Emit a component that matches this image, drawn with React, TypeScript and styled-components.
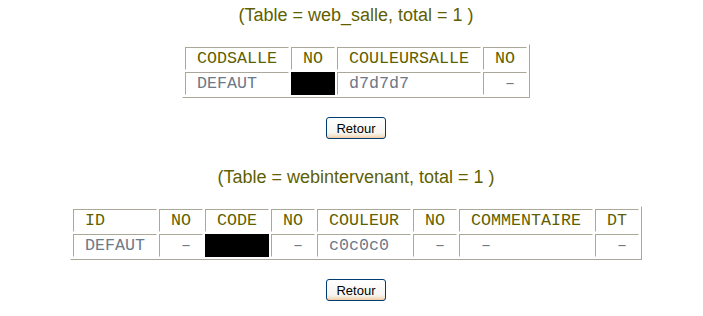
import React from "react";
import styled, { createGlobalStyle } from "styled-components";

const GlobalStyle = createGlobalStyle`
  html, body {
    margin: 0;
    padding: 0;
    background: #ffffff;
  }
  body {
    overflow: hidden;
  }
`;

const Page = styled.main`
  width: 694px;
  padding: 5px 0 0 9px;
  display: flex;
  flex-direction: column;
  align-items: center;
  gap: 28px;
`;

const Section = styled.section`
  display: flex;
  flex-direction: column;
  align-items: center;
`;

const Title = styled.h2`
  margin: 0 0 18px;
  font-family: "Liberation Sans", Arial, sans-serif;
  font-size: 18px;
  line-height: 21px;
  font-weight: normal;
  color: #5f5f00;
  white-space: pre;
`;

const Table = styled.table`
  border-collapse: separate;
  border-spacing: 2px;
  border: 1px solid;
  border-color: #ffffff #aca899 #aca899 #ffffff;
  margin: 0 0 19px;
  font-family: "Liberation Mono", "Courier New", monospace;
  font-size: 16.667px;
  line-height: 19px;
`;

const HeadCell = styled.th`
  font-weight: normal;
  text-align: left;
  color: #5f5f00;
  padding: 1px 11px;
  border: 1px solid;
  border-color: #aca899 #ffffff #ffffff #aca899;
  white-space: pre;
`;

const Cell = styled.td<{ $align?: "left" | "right"; $swatch?: string }>`
  text-align: ${(p) => p.$align ?? "left"};
  color: #6d7888;
  padding: 1px 11px;
  border: 1px solid;
  border-color: ${(p) =>
    p.$swatch ? p.$swatch : "#aca899 #ffffff #ffffff #aca899"};
  background: ${(p) => p.$swatch ?? "transparent"};
  white-space: pre;
`;

const Button = styled.button`
  height: 22px;
  padding: 0 9px;
  border: 1px solid #003c74;
  border-radius: 3px;
  background: linear-gradient(
    to bottom,
    #ffffff 0%,
    #f6f5f0 75%,
    #f3e2c8 90%,
    #efc9a0 100%
  );
  font-family: "Liberation Sans", Arial, sans-serif;
  font-size: 13px;
  line-height: 15px;
  color: #000000;
  cursor: pointer;
`;

type Column = { label: string; align?: "left" | "right" };
type Value = { text?: string; swatch?: string };

type DataTable = {
  name: string;
  columns: Column[];
  row: Value[];
};

const DASH = "\u2013";

const tables: DataTable[] = [
  {
    name: "web_salle",
    columns: [
      { label: "CODSALLE" },
      { label: "NO" },
      { label: "COULEURSALLE" },
      { label: "NO", align: "right" },
    ],
    row: [
      { text: "DEFAUT" },
      { swatch: "#000000" },
      { text: "d7d7d7" },
      { text: DASH },
    ],
  },
  {
    name: "webintervenant",
    columns: [
      { label: "ID" },
      { label: "NO", align: "right" },
      { label: "CODE" },
      { label: "NO", align: "right" },
      { label: "COULEUR" },
      { label: "NO", align: "right" },
      { label: "COMMENTAIRE" },
      { label: "DT", align: "right" },
    ],
    row: [
      { text: "DEFAUT" },
      { text: DASH },
      { swatch: "#000000" },
      { text: DASH },
      { text: "c0c0c0" },
      { text: DASH },
      { text: "\u00a0" + DASH },
      { text: DASH },
    ],
  },
];

function TableView({ table }: { table: DataTable }) {
  return (
    <Section>
      <Title>{`(Table = ${table.name}, total = 1 )`}</Title>
      <Table>
        <thead>
          <tr>
            {table.columns.map((c, i) => (
              <HeadCell key={i}>{c.label}</HeadCell>
            ))}
          </tr>
        </thead>
        <tbody>
          <tr>
            {table.row.map((v, i) => (
              <Cell key={i} $align={table.columns[i].align} $swatch={v.swatch}>
                {v.text ?? ""}
              </Cell>
            ))}
          </tr>
        </tbody>
      </Table>
      <Button type="button">Retour</Button>
    </Section>
  );
}

export default function App() {
  return (
    <>
      <GlobalStyle />
      <Page>
        {tables.map((t) => (
          <TableView key={t.name} table={t} />
        ))}
      </Page>
    </>
  );
}
